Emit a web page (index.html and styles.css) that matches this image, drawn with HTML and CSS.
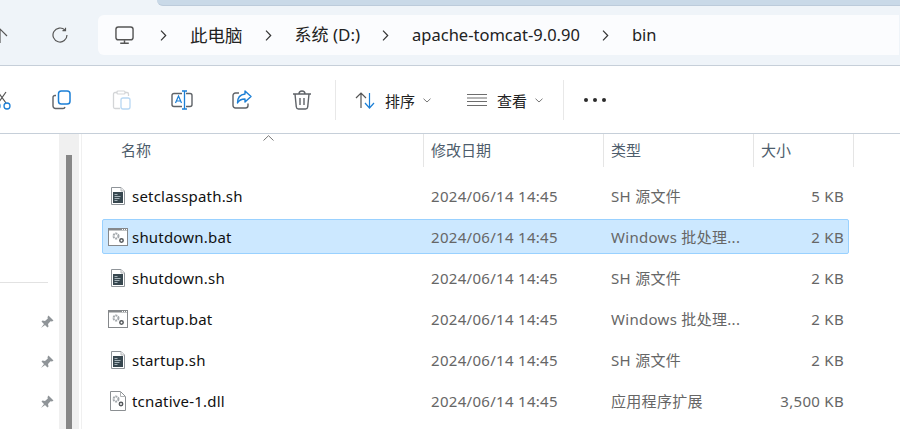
FILE: index.html
```html
<!DOCTYPE html>
<html lang="zh-CN">
<head>
<meta charset="utf-8">
<title>bin</title>
<link rel="stylesheet" href="styles.css">
</head>
<body>
<svg class="defs" width="0" height="0" aria-hidden="true">
  <defs>
    <symbol id="sh" viewBox="0 0 16 18">
      <path d="M1.500.5H11L14.500 4V17.500H1.500z" fill="#fff" stroke="#8f9499"/>
      <path d="M11 .5V4h3.500" fill="#eee" stroke="#b5b8bb"/>
      <rect x="3" y="5" width="10" height="11" fill="#37474f"/>
      <path d="M4.500 7.500h3M4.500 9.500h6M4.500 11.500h5M4.500 13.500h3" stroke="#a7b4ba" fill="none"/>
    </symbol>
    <symbol id="bat" viewBox="0 0 20 18">
      <rect x=".5" y=".5" width="19" height="17" fill="#fff" stroke="#85888b"/>
      <path d="M1 1.500h18" stroke="#85888b" stroke-width="2"/>
      <path d="M14 1.500h1M16 1.500h1M18 1.500h1" stroke="#fff"/>
      <circle cx="8" cy="8" r="2.500" fill="none" stroke="#a3a8ac" stroke-width="2" stroke-dasharray="2 .7"/>
      <circle cx="13.500" cy="12.500" r="1.700" fill="none" stroke="#55595c" stroke-width="1.500"/>
    </symbol>
    <symbol id="dll" viewBox="0 0 16 20">
      <path d="M.5.500H10.500L15.500 5.500V19.500H.5z" fill="#fff" stroke="#8b8f92"/>
      <path d="M10.500.5V5.500H15.500" fill="none" stroke="#b0b3b5"/>
      <circle cx="6" cy="8" r="2.500" fill="none" stroke="#a3a8ac" stroke-width="2" stroke-dasharray="2 .7"/>
      <circle cx="11" cy="13" r="1.700" fill="none" stroke="#55595c" stroke-width="1.500"/>
    </symbol>
    <symbol id="pin" viewBox="0 0 14 14">
      <path d="M8.500.5 13.500 5.500 12 6.500 10.500 6.200 8 9 8.500 11.500 7.500 12.500 1.500 6.500 2.500 5.500 5 6 7.800 3.500 7.500 2zM4 9 1 13 5 10z" fill="#8f9498"/>
    </symbol>
  </defs>
</svg>
<div class="app">
  <header class="top">
    <div class="tab"></div>
    <div class="address">
      <div class="nav">
        <svg class="up" width="8" height="16" viewBox="0 0 8 16"><path d="M-7 8 0 1 7 8M0 1V15" fill="none" stroke="#555" stroke-width="1.200"/></svg>
        <svg class="refresh" width="16" height="16" viewBox="0 0 16 16"><path d="M13 3.100A7 7 0 1 0 15 8M13.500.8V3.600H10.500" fill="none" stroke="#555" stroke-width="1.200"/></svg>
      </div>
      <nav class="crumbs">
        <svg class="pc" width="19" height="19" viewBox="0 0 20 20"><rect x="1" y="1" width="18" height="13.500" rx="2.500" fill="none" stroke="#555" stroke-width="1.500"/><path d="M10 15v3M5.500 18.200h9" fill="none" stroke="#555" stroke-width="1.500"/></svg>
        <svg class="sep" width="7" height="11" viewBox="0 0 7 11"><path d="M1 .7 5.700 5.500 1 10.300" fill="none" stroke="#333" stroke-width="1.200"/></svg>
        <span class="crumb cjk">此电脑</span>
        <svg class="sep" width="7" height="11" viewBox="0 0 7 11"><path d="M1 .7 5.700 5.500 1 10.300" fill="none" stroke="#333" stroke-width="1.200"/></svg>
        <span class="crumb mixed">系统 (D:)</span>
        <svg class="sep" width="7" height="11" viewBox="0 0 7 11"><path d="M1 .7 5.700 5.500 1 10.300" fill="none" stroke="#333" stroke-width="1.200"/></svg>
        <span class="crumb">apache-tomcat-9.0.90</span>
        <svg class="sep" width="7" height="11" viewBox="0 0 7 11"><path d="M1 .7 5.700 5.500 1 10.300" fill="none" stroke="#333" stroke-width="1.200"/></svg>
        <span class="crumb">bin</span>
      </nav>
    </div>
  </header>

  <div class="toolbar">
    <div class="tool"><svg width="20" height="20" viewBox="0 0 20 20"><path d="M6 2 14 13M14 2 7 12" fill="none" stroke="#555" stroke-width="1.200"/><circle cx="15" cy="16" r="3" fill="none" stroke="#1b7fd6" stroke-width="1.300"/><circle cx="5" cy="16" r="3" fill="none" stroke="#1b7fd6" stroke-width="1.300"/></svg></div>
    <div class="tool"><svg width="20" height="20" viewBox="0 0 20 20"><path d="M4 5.500H3A2 2 0 0 0 1 7.500V16A2.500 2.500 0 0 0 3.500 18.500H11A2 2 0 0 0 13 17" fill="none" stroke="#5f6368" stroke-width="1.400"/><rect x="6.500" y="1" width="11.500" height="13" rx="2.800" fill="none" stroke="#1b7fd6" stroke-width="1.500"/></svg></div>
    <div class="tool"><svg width="20" height="20" viewBox="0 0 20 20"><path d="M5 2.500H3A1.500 1.500 0 0 0 1.500 4V17A1.500 1.500 0 0 0 3 18.500H8M13 2.500H15A1.500 1.500 0 0 1 16.500 4V6" fill="none" stroke="#d3d5d7" stroke-width="1.300"/><rect x="5" y="1" width="8" height="3" rx="1" fill="none" stroke="#d3d5d7" stroke-width="1.200"/><rect x="9" y="8" width="9" height="11" rx="2" fill="none" stroke="#b8d8f3" stroke-width="1.300"/></svg></div>
    <div class="tool"><svg width="22" height="20" viewBox="0 0 22 20"><path d="M11 3.500H3A2 2 0 0 0 1 5.500V14.500A2 2 0 0 0 3 16.500H11M15 3.500H19A2 2 0 0 1 21 5.500V14.500A2 2 0 0 1 19 16.500H15" fill="none" stroke="#5f6368" stroke-width="1.400"/><path d="M11 1H16M13.500 1V19M11 19H16" fill="none" stroke="#1b7fd6" stroke-width="1.300"/><path d="M4.500 13 7.500 6 10.500 13M5.500 11H9.500" fill="none" stroke="#1b7fd6" stroke-width="1.200"/></svg></div>
    <div class="tool"><svg width="20" height="20" viewBox="0 0 20 20"><path d="M7 3H3.500A2.500 2.500 0 0 0 1 5.500V15.500A2.500 2.500 0 0 0 3.500 18H13.500A2.500 2.500 0 0 0 16 15.500V13.500" fill="none" stroke="#5f6368" stroke-width="1.400"/><path d="M13 1 19 6.500 13 12V9C9 9 7 10 5.500 13 5.500 8 8 4.500 13 4z" fill="none" stroke="#1b7fd6" stroke-width="1.400" stroke-linejoin="round"/></svg></div>
    <div class="tool"><svg width="20" height="20" viewBox="0 0 20 20"><path d="M1 4H19M7 4C7 2 8 1 10 1S13 2 13 4M3 4 4.300 17A2.300 2.300 0 0 0 6.500 19H13.500A2.300 2.300 0 0 0 15.700 17L17 4M8 8V15M12 8V15" fill="none" stroke="#5f6368" stroke-width="1.400"/></svg></div>
    <div class="divider first"></div>
    <div class="menu sort">
      <svg width="20" height="17" viewBox="0 0 20 17"><path d="M1 6 6 1 11 6M6 1V16" fill="none" stroke="#555" stroke-width="1.200"/><path d="M10 11 14.500 16 19 11M14.500 16V1" fill="none" stroke="#1b7fd6" stroke-width="1.200"/></svg>
      <span>排序</span>
      <svg class="caret" width="8" height="5" viewBox="0 0 8 5"><path d="M.5.7 4 4 7.500.7" fill="none" stroke="#777"/></svg>
    </div>
    <div class="menu view">
      <svg width="20" height="14" viewBox="0 0 20 14"><path d="M0 1.500H20M0 5H20M0 8.500H20M0 12.500H20" fill="none" stroke="#6d6d6d"/></svg>
      <span>查看</span>
      <svg class="caret" width="8" height="5" viewBox="0 0 8 5"><path d="M.5.7 4 4 7.500.7" fill="none" stroke="#777"/></svg>
    </div>
    <div class="divider"></div>
    <div class="more"><i></i><i></i><i></i></div>
  </div>

  <main class="body">
    <aside class="side">
      <div class="quick">
        <hr class="rule">
        <svg class="pin"><use href="#pin"/></svg>
        <svg class="pin"><use href="#pin"/></svg>
        <svg class="pin"><use href="#pin"/></svg>
      </div>
      <div class="track"><div class="thumb"></div></div>
    </aside>
    <section class="list">
      <div class="head">
        <svg class="sortmark" width="11" height="6" viewBox="0 0 11 6"><path d="M.5 5.500 5.500.7 10.500 5.500" fill="none" stroke="#777"/></svg>
        <div class="h h-name">名称</div>
        <div class="h h-date">修改日期</div>
        <div class="h h-type">类型</div>
        <div class="h h-size">大小</div>
      </div>
      <div class="rows">
        <div class="row"><svg class="ic ic-sh"><use href="#sh"/></svg><span class="name">setclasspath.sh</span><span class="meta">2024/06/14 14:45</span><span class="meta">SH 源文件</span><span class="meta size">5 KB</span></div>
        <div class="row selected"><svg class="ic ic-bat"><use href="#bat"/></svg><span class="name">shutdown.bat</span><span class="meta">2024/06/14 14:45</span><span class="meta">Windows 批处理...</span><span class="meta size">2 KB</span></div>
        <div class="row"><svg class="ic ic-sh"><use href="#sh"/></svg><span class="name">shutdown.sh</span><span class="meta">2024/06/14 14:45</span><span class="meta">SH 源文件</span><span class="meta size">2 KB</span></div>
        <div class="row"><svg class="ic ic-bat"><use href="#bat"/></svg><span class="name">startup.bat</span><span class="meta">2024/06/14 14:45</span><span class="meta">Windows 批处理...</span><span class="meta size">2 KB</span></div>
        <div class="row"><svg class="ic ic-sh"><use href="#sh"/></svg><span class="name">startup.sh</span><span class="meta">2024/06/14 14:45</span><span class="meta">SH 源文件</span><span class="meta size">2 KB</span></div>
        <div class="row"><svg class="ic ic-dll"><use href="#dll"/></svg><span class="name">tcnative-1.dll</span><span class="meta">2024/06/14 14:45</span><span class="meta">应用程序扩展</span><span class="meta size">3,500 KB</span></div>
      </div>
    </section>
  </main>
</div>
</body>
</html>
```

FILE: styles.css
```css
* { box-sizing: border-box; }
html, body { margin: 0; height: 100%; overflow: hidden; background: #fff; }
body { font-family: "Noto Sans", "Noto Sans CJK SC", sans-serif; color: #1c1c1c; }
.defs { position: absolute; }
.app { width: 900px; height: 429px; display: flex; flex-direction: column; overflow: hidden; }

.top { height: 66px; background: #eff4f9; border-bottom: 1px solid #c6cfd9; flex: none; }
.tab { height: 6px; margin-left: 157px; background: #c9d9e8; border-bottom-left-radius: 6px; border-bottom: 1px solid #bccbdb; }
.address { display: flex; height: 40px; margin-top: 9px; }
.nav { width: 98px; flex: none; display: flex; align-items: center; position: relative; }
.up { position: absolute; left: 0; top: 13px; overflow: visible; }
.refresh { margin-left: 52px; }
.crumbs { flex: 1; display: flex; align-items: center; background: #fbfcfe; border-radius: 6px 0 0 6px; padding-left: 17px; margin-right: 1px; font-size: 16.500px; color: #222; }
.pc { margin-right: 26px; }
.sep { flex: none; }
.crumb { margin: 0 22px 0 23px; line-height: 22px; white-space: nowrap; }
.crumb.cjk { font-size: 17.500px; }
.crumb.mixed { font-size: 17px; }

.toolbar { height: 68px; flex: none; display: flex; align-items: center; border-bottom: 1px solid #c6cfd9; padding-top: 1px; margin-left: -28px; width: 928px; }
.tool { width: 60px; height: 40px; flex: none; display: flex; align-items: center; justify-content: center; }
.divider { width: 1px; height: 40px; background: #e8e8e8; flex: none; }
.divider.first { margin-left: 3px; }
.menu { display: flex; align-items: center; font-size: 15px; color: #222; flex: none; }
.menu span { margin: 0 8px 0 10px; }
.sort { margin-left: 19px; }
.view { margin-left: 36px; margin-right: 20px; }
.more { display: flex; gap: 5px; margin-left: 20px; }
.more i { width: 4px; height: 4px; border-radius: 50%; background: #2b2b2b; display: block; }

.body { flex: 1; display: flex; min-height: 0; }
.side { width: 82px; flex: none; display: flex; border-right: 1px solid #f0f0f0; }
.quick { width: 59px; flex: none; display: flex; flex-direction: column; align-items: flex-end; }
.rule { width: 48px; height: 1px; border: 0; background: #e2e2e2; margin: 148px 11px 0 0; align-self: flex-start; }
.pin { width: 14px; height: 14px; margin: 32px 5px 0 0; }
.pin + .pin { margin-top: 26px; }
.track { width: 20px; flex: none; background: #f0f0f0; padding: 21px 0 0 7px; }
.thumb { width: 6px; height: 100%; background: #878787; }

.list { flex: 1; min-width: 0; padding-left: 20px; }
.head { height: 33px; display: flex; position: relative; font-size: 15px; color: #4e5d6c; }
.sortmark { position: absolute; left: 161px; top: 1px; }
.h { height: 100%; padding: 6px 0 0 7px; border-right: 1px solid #e5e5e5; line-height: 20px; }
.h-name { width: 322px; padding-left: 19px; }
.h-date { width: 180px; }
.h-type { width: 150px; }
.h-size { width: 100px; }

.rows { padding-top: 11px; display: flex; flex-direction: column; gap: 6px; width: 747px; }
.row { height: 35px; display: grid; grid-template-columns: 29px 292px 180px 150px 1fr; align-items: center; border: 1px solid transparent; border-radius: 2px; font-size: 15px; }
.row.selected { background: #cce8ff; border-color: #99d1ff; }
.ic { justify-self: center; }
.ic-sh { width: 16px; height: 18px; }
.ic-bat { width: 20px; height: 18px; }
.ic-dll { width: 16px; height: 20px; }
.name { color: #111; white-space: nowrap; letter-spacing: .2px; }
.meta { color: #666; white-space: nowrap; padding-left: 7px; letter-spacing: .3px; }
.size { text-align: right; padding-right: 4px; padding-left: 0; }
```
